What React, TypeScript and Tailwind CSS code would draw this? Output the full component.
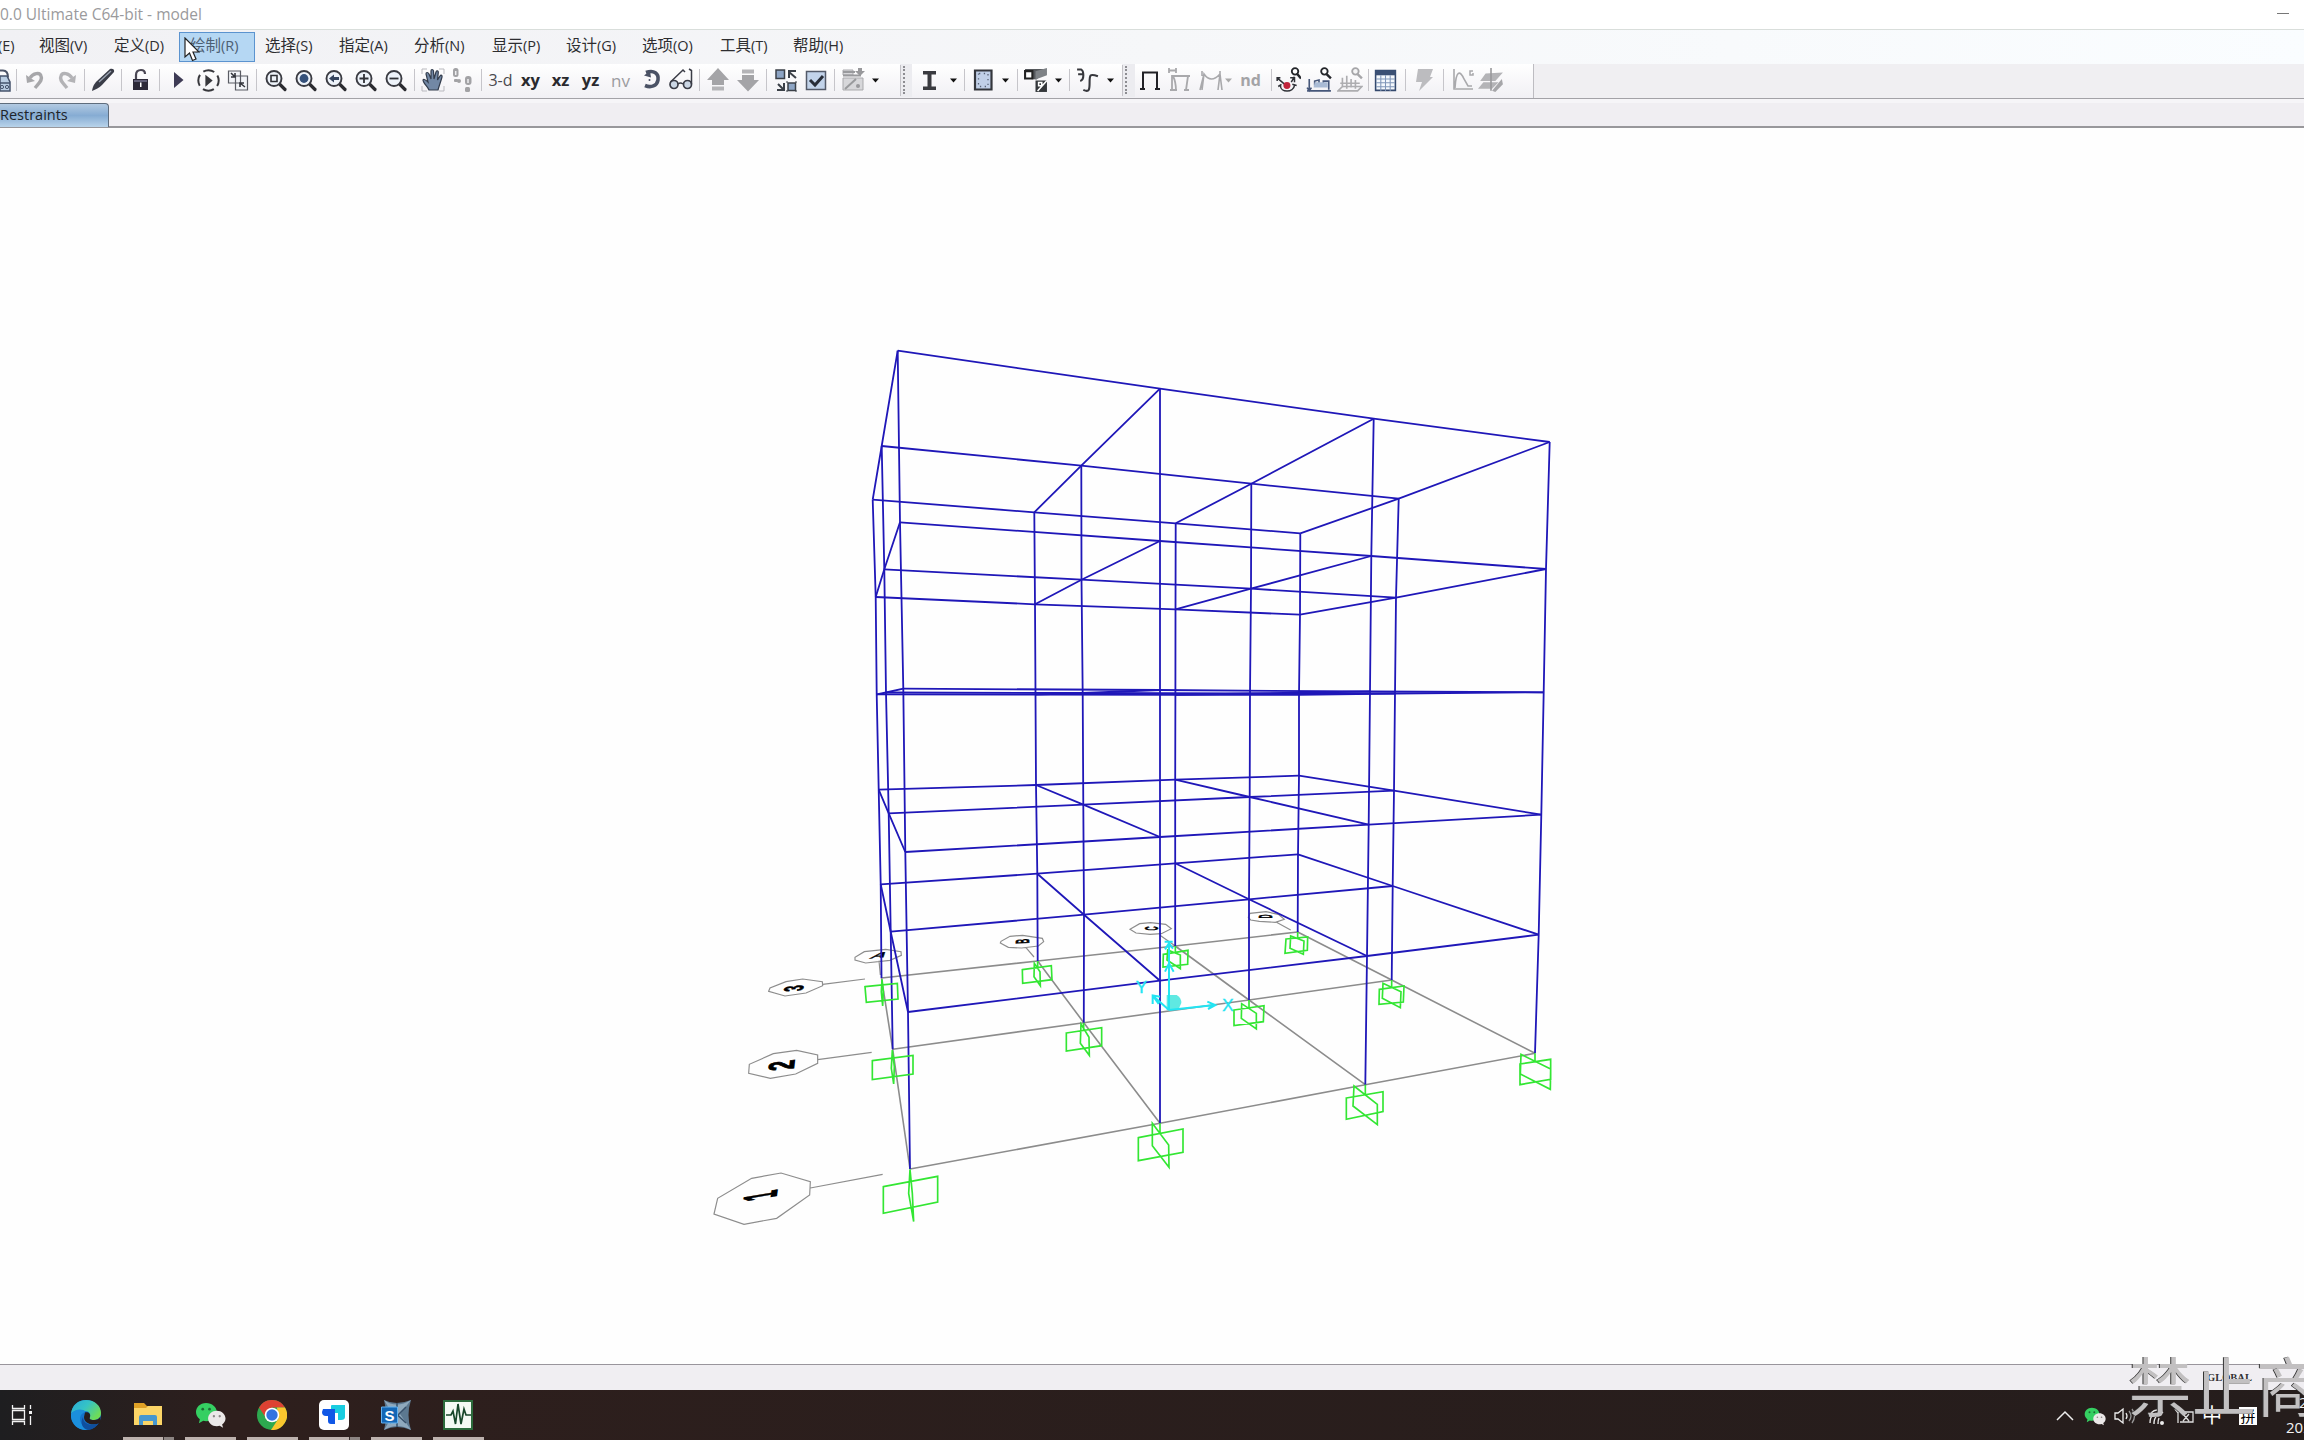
import type { ReactNode } from "react";

type Pt = [number, number];

const menus = [
  { label: "视图(V)", className: "w-[75px]" },
  { label: "定义(D)", className: "w-[75px]" },
  { label: "绘制(R)", className: "w-[76px]", active: true },
  { label: "选择(S)", className: "w-[74px]" },
  { label: "指定(A)", className: "w-[75px]" },
  { label: "分析(N)", className: "w-[78px]" },
  { label: "显示(P)", className: "w-[74px]" },
  { label: "设计(G)", className: "w-[76px]" },
  { label: "选项(O)", className: "w-[78px]" },
  { label: "工具(T)", className: "w-[73px]" },
  { label: "帮助(H)", className: "w-[75px]" },
];

// joints[level][row][bay], level 0 is the base, row 0 is grid line 1
const joints: Pt[][][] = [
  [
    [[910, 1169], [1160, 1123.3], [1365.3, 1084.7], [1535, 1053.3]],
    [[892.7, 1049.3], [1083.8, 1022.7], [1249, 1000], [1391.7, 980]],
    [[881.5, 978], [1037.7, 961], [1175.2, 946], [1297.7, 932]],
  ],
  [
    [[908, 1012], [1160, 980.7], [1367, 956], [1538.7, 934.7]],
    [[890.7, 931.7], [1084, 914.7], [1249, 899.3], [1392.7, 886]],
    [[880.7, 884.3], [1037.3, 873.7], [1175.2, 863.3], [1298, 854.3]],
  ],
  [
    [[905.3, 852], [1160, 837], [1368.7, 824.7], [1541.3, 814.7]],
    [[888.7, 813.3], [1083.3, 804.7], [1249.7, 797], [1394, 790.7]],
    [[878.7, 789.7], [1036, 785], [1175.2, 779.7], [1299, 775.7]],
  ],
  [
    [[903.3, 688.7], [1160, 690], [1370, 691.5], [1543.7, 692.3]],
    [[886, 692.5], [1082.7, 693], [1250, 693.5], [1395, 693.5]],
    [[876.7, 694.3], [1035.5, 694.5], [1175.4, 694.8], [1299, 694.8]],
  ],
  [
    [[900, 522.3], [1160, 541], [1371.3, 556], [1546, 569]],
    [[884.3, 569.3], [1081.5, 579.7], [1251, 588.7], [1396, 597.7]],
    [[875.7, 597], [1035, 604.3], [1175.5, 609.3], [1300, 614.7]],
  ],
  [
    [[897.7, 350.7], [1160, 388.7], [1373.7, 418.7], [1549.7, 442]],
    [[881.7, 446], [1081.3, 465.7], [1251.3, 483.7], [1398.7, 498.7]],
    [[872.7, 499.7], [1034.3, 512.3], [1175.7, 523.3], [1300.3, 533.3]],
  ],
];

const toPoints = (pts: Pt[]) => pts.map((p) => p.join(",")).join(" ");

const floorLines = (level: Pt[][]) => [
  ...level,
  ...[0, 1, 2, 3].map((bay) => level.map((row) => row[bay])),
];

const columns = [0, 1, 2].flatMap((row) =>
  [0, 1, 2, 3].map((bay) => joints.map((level) => level[row][bay])),
);

function Svg({ size = 24, children }: { size?: number; children: ReactNode }) {
  return (
    <svg width={size} height={size} viewBox="0 0 24 24" fill="none" className="shrink-0">
      {children}
    </svg>
  );
}

function Tool({ w = "w-[30px]", children }: { w?: string; children: ReactNode }) {
  return <div className={`flex h-full shrink-0 items-center justify-center ${w}`}>{children}</div>;
}

function Sep({ w = "w-[7.5px]" }: { w?: string }) {
  return (
    <div className={`flex shrink-0 justify-center ${w}`}>
      <div className="h-[22px] w-px bg-[#c6c5ca]" />
    </div>
  );
}

function Arrow({ w = "w-[17px]", color = "#111" }: { w?: string; color?: string }) {
  return (
    <div className={`flex shrink-0 justify-center ${w}`}>
      <svg width="7" height="5" viewBox="0 0 7 5" className="shrink-0">
        <path d="M0 .5h7L3.5 4.5z" fill={color} />
      </svg>
    </div>
  );
}

function Grip({ className }: { className: string }) {
  return (
    <div className={`flex h-[33px] shrink-0 items-center gap-[2px] bg-[#ececf0] ${className}`}>
      <div className="h-[31px] w-px bg-[#c4c3c8]" />
      <div className="h-[28px] border-l-2 border-dotted border-[#8d8d92]" />
    </div>
  );
}

function Magnifier({ children }: { children?: ReactNode }) {
  return (
    <Svg>
      <path d="m16 16.500 5 5" stroke="#2b2b30" strokeWidth="3.200" strokeLinecap="round" />
      <circle cx="10" cy="10.500" r="7.500" fill="#eef3fa" stroke="#3a3b42" strokeWidth="1.900" />
      {children}
    </Svg>
  );
}

function PlaneLabel({ text, className }: { text: string; className: string }) {
  return (
    <Tool>
      <span className={`leading-none ${className}`}>{text}</span>
    </Tool>
  );
}

function Toolbar() {
  return (
    <div className="flex h-[34px] shrink-0 items-center overflow-hidden bg-[#f0eff2]">
      <div className="flex h-full w-[1534px] shrink-0 items-center border-r border-[#bdbcc1] bg-gradient-to-b from-white to-[#f1f0f4] pb-[2px]">
        <svg width="13" height="24" viewBox="0 0 13 24" className="shrink-0">
          <path d="M0 2.500h3q5 0 5 7" fill="none" stroke="#4c5568" strokeWidth="2" />
          <path d="M0 8h7l3 6v9H0z" fill="#b9cde2" stroke="#45536c" strokeWidth="1.500" />
          <path d="M0 15h10" stroke="#45536c" strokeWidth="1.500" />
          <circle cx="2" cy="19" r="1.600" fill="none" stroke="#45536c" />
          <circle cx="7" cy="19" r="1.600" fill="none" stroke="#45536c" />
        </svg>
        <Sep />
        <Tool>
          <Svg>
            <path d="M6 10c3-5 10-6 11-2 2 4-2 7-6 12" stroke="#a7a7aa" strokeWidth="3.400" />
            <path d="M2 7l1 8 8-2z" fill="#a7a7aa" />
          </Svg>
        </Tool>
        <Tool>
          <Svg>
            <path d="M18 10c-3-5-10-6-11-2-2 4 2 7 6 12" stroke="#b3b3b6" strokeWidth="3.400" />
            <path d="M22 7l-1 8-8-2z" fill="#b3b3b6" />
          </Svg>
        </Tool>
        <Sep />
        <Tool>
          <Svg>
            <path d="M1 23c1-5 2-7 5-10L19 1c2-1 5 0 4 3L11 17c-3 3-6 4-10 6z" fill="#3a3d48" />
            <path d="M8 14 20 3" stroke="#9ba3b2" strokeWidth="1.300" />
          </Svg>
        </Tool>
        <Sep />
        <Tool>
          <Svg>
            <path d="M7 12V7q0-5 5-5 4 0 4 4" stroke="#4a4754" strokeWidth="2.200" />
            <path d="M4 11h15v11H4z" fill="#2c2938" />
            <path d="M5 13h13" stroke="#626078" strokeWidth="2" />
            <path d="M11 14.500h1.500V19H11z" fill="#fff" />
          </Svg>
        </Tool>
        <Sep />
        <Tool>
          <Svg>
            <path d="M8 4 17.500 12 8 20z" fill="#3e3b55" />
          </Svg>
        </Tool>
        <Tool>
          <Svg size={25}>
            <circle cx="12" cy="12" r="9.800" stroke="#37373c" strokeWidth="1.900" strokeDasharray="11 4.400" strokeDashoffset="5.500" />
            <path d="M9 6.500 16 12l-7 6z" fill="#37373c" />
          </Svg>
        </Tool>
        <Tool>
          <Svg>
            <path d="M2.500 3h12v5h7v14h-12v-7h-7z" fill="#f2f4f8" stroke="#5a5c64" strokeWidth="1.200" />
            <path d="M9.500 15V8h5v7z" stroke="#5a5c64" strokeWidth="1.200" />
            <path d="m5 5 4 4m0-4v4H5M19 19l-5-4m0 4v-4h4" stroke="#33353c" strokeWidth="1.600" />
          </Svg>
        </Tool>
        <Sep />
        <Tool>
          <Magnifier>
            <path d="M7 7.500h6v6H7z" stroke="#2f3036" strokeWidth="1.600" />
          </Magnifier>
        </Tool>
        <Tool>
          <Magnifier>
            <circle cx="10" cy="10.500" r="4.400" fill="#34507a" />
          </Magnifier>
        </Tool>
        <Tool>
          <Magnifier>
            <path d="M5 10.500 10 6.500v2.500h5v3h-5v2.500z" fill="#34435e" />
          </Magnifier>
        </Tool>
        <Tool>
          <Magnifier>
            <path d="M5.500 10.500h9M10 6v9" stroke="#2f3036" strokeWidth="1.800" />
          </Magnifier>
        </Tool>
        <Tool>
          <Magnifier>
            <path d="M5.500 10.500h9" stroke="#2f3036" strokeWidth="1.800" />
          </Magnifier>
        </Tool>
        <Sep />
        <Tool>
          <Svg>
            <path d="M1 6V1h5M18 1h5v5M1 18v5h5M18 23h5v-5" stroke="#b9b9be" />
            <path
              d="M8 22c-1-3-6-7-6-10 0-1 2-1 5 2L5 6c0-2 2-2 3 0l2 5V3c0-2 2-2 2.500 0l.5 8 2-7c.5-2 2.500-1 2.300.5L16.500 12l2.500-4c1-1.500 2.500-.5 2 1-1 4-3 9-4 13z"
              fill="#7288a5"
              stroke="#323c4c"
              strokeWidth="1.200"
            />
          </Svg>
        </Tool>
        <Tool>
          <Svg>
            <g fill="#a2a2a5">
              <rect x="2" y="0" width="5.500" height="9" rx="2.500" />
              <rect x="3" y="11" width="4" height="3" rx="1" />
              <circle cx="8" cy="13" r="2" />
              <rect x="14" y="8" width="6.500" height="9" rx="3" />
              <rect x="14" y="19" width="5" height="5" rx="1.500" />
            </g>
            <path d="M4.700 3v4M17 11v4" stroke="#efeff2" strokeWidth="1.500" />
          </Svg>
        </Tool>
        <Sep />
        <PlaneLabel text="3-d" className="text-[16px] text-[#4a4a4e]" />
        <PlaneLabel text="xy" className="text-[16.5px] font-bold text-[#2a2a2e]" />
        <PlaneLabel text="xz" className="text-[16.5px] font-bold text-[#2a2a2e]" />
        <PlaneLabel text="yz" className="text-[16.5px] font-bold text-[#2a2a2e]" />
        <PlaneLabel text="nv" className="text-[17px] font-medium text-[#9c9c9f]" />
        <Tool>
          <Svg>
            <path d="M7 4.500c8-3 13 1 12 7.500-1 6-7 8-13 5.500" stroke="#4b5265" strokeWidth="3.600" />
            <path d="m11 3-6 4.500 7 2z" fill="#4b5265" />
            <circle cx="10.500" cy="12" r="1" fill="#4b5265" />
          </Svg>
        </Tool>
        <Tool>
          <Svg>
            <circle cx="5" cy="16.500" r="4" fill="#cbd6e4" stroke="#3a3c46" strokeWidth="1.700" />
            <circle cx="18.500" cy="16.500" r="4" fill="#cbd6e4" stroke="#3a3c46" strokeWidth="1.700" />
            <path d="M9 16q2.500-2 5 0M1.500 14 14 2l2 2M22.500 16V2.500L20 1" stroke="#3a3c46" strokeWidth="1.500" />
          </Svg>
        </Tool>
        <Sep />
        <Tool>
          <Svg>
            <path d="m12 0 11 12h-5v5H6v-5H1z" fill="#a4a4a7" />
            <path d="M6 18.500h12v4H6z" fill="#b4b4b7" />
          </Svg>
        </Tool>
        <Tool>
          <Svg>
            <path d="M12 23.500 1 12h5V7h12v5h5z" fill="#a4a4a7" />
            <path d="M6 1.500h12v4H6z" fill="#b4b4b7" />
          </Svg>
        </Tool>
        <Sep />
        <Tool>
          <Svg>
            <path d="M2 2h8.500v8.500H2zM14 15h7.500v7.500H14z" fill="#8da4c4" stroke="#3b4048" strokeWidth="1.500" />
            <path d="M22 10l-7-6m0 6V3h7M4 16l6 6m0-7v7H3" stroke="#3b4048" strokeWidth="2" />
            <path d="M12 14h2M21 14h2M12 23h2M21 23h2" stroke="#3b4048" />
          </Svg>
        </Tool>
        <Tool>
          <Svg>
            <path d="M2.500 3.500h19v18h-19z" fill="#c2d3ea" stroke="#535a69" strokeWidth="1.500" />
            <path d="m6 12 5 5 8-9" stroke="#272d38" strokeWidth="3" />
          </Svg>
        </Tool>
        <Sep />
        <Tool>
          <Svg>
            <path d="M2 2h10v5H2zM2 10h20v12H2z" fill="#d7d7da" stroke="#a9a9ac" />
            <path d="M2 4h12M2 7.500h18M4 21l11-10" stroke="#999a9d" strokeWidth="2" />
            <path d="m14 3 5 5 5-5h-3V0h-4v3z" fill="#98989b" />
            <circle cx="17" cy="18" r="2" fill="#98989b" />
          </Svg>
        </Tool>
        <Arrow w="w-[15px]" />
        <Grip className="ml-[17px] w-[12px]" />
        <Tool w="w-[34px]">
          <Svg>
            <path d="M6 3h13v3.500h-4.500v12H19V22H6v-3.500h4.500v-12H6z" fill="#3a3b40" />
          </Svg>
        </Tool>
        <Arrow w="w-[15px]" />
        <Sep w="w-[7px]" />
        <Tool w="w-[29px]">
          <Svg>
            <path d="M4 2.500h16.500v19H4z" fill="#c1d0e8" stroke="#34363c" strokeWidth="2.200" />
            <path d="M7.500 5.500v13h9.500v-13z" stroke="#5a6478" strokeWidth="1.300" strokeDasharray="1.300 3.500" />
          </Svg>
        </Tool>
        <Arrow />
        <Sep w="w-[7px]" />
        <Tool w="w-[29px]">
          <Svg size={25}>
            <path d="M2 1h21L13 11 2 10z" fill="#55585c" />
            <path d="M12 3 23 0v7l-11 4z" fill="#7e8286" />
            <path d="M2 3h7v7H2z" fill="#fff" stroke="#222" strokeWidth="2" />
            <path d="M12 12h11v11H12z" fill="#34373b" />
            <path d="m14 22 9-10M15 14h3v3h-3z" stroke="#fff" strokeWidth="1.500" />
          </Svg>
        </Tool>
        <Arrow />
        <Sep w="w-[5px]" />
        <Tool w="w-[30px]">
          <Svg size={25}>
            <path d="M2 1.500h4q2 1 2 5.500t-3 5.500M3 6h4M8 21c6 3 6-1 6-7 0-7 0-9 8-6" stroke="#37383d" strokeWidth="2" />
          </Svg>
        </Tool>
        <Arrow />
        <Grip className="ml-[2.5px] w-[13px]" />
        <Tool w="w-[30px]">
          <Svg>
            <path d="M5 21V4.500h14V21M2 21h5M17 21h5" stroke="#222227" strokeWidth="2" />
          </Svg>
        </Tool>
        <Tool w="w-[31px]">
          <Svg>
            <path d="M1 0v5M8 0v5M1 2.500h7M4 22V8h18M5 8q3 6 3 15M20 8l-2 14M2 22h7M16 22h5" stroke="#a9a9ac" strokeWidth="1.800" />
          </Svg>
        </Tool>
        <Tool w="w-[30px]">
          <Svg>
            <path d="M3 22 5 6q7 10 16 0l2 16M5 6 1 22M21 6l-2 16M3 3v5M21 3v5" stroke="#a9a9ac" strokeWidth="1.600" />
          </Svg>
        </Tool>
        <Arrow w="w-[6px]" color="#aaa" />
        <Tool w="w-[38px]">
          <span className="text-[16px] font-bold leading-none text-[#a3a3a6]">nd</span>
        </Tool>
        <Sep w="w-[3px]" />
        <Tool w="w-[31px]">
          <Svg size={26}>
            <path d="M2 10l7 6M2 13v-3h3M15 14l3-5M14 10h4v4M5 17c0 7 12 7 13 0M3 18l3-2M16 16l4 1" stroke="#303238" strokeWidth="1.400" />
            <circle cx="11" cy="17" r="3.200" fill="#c0243c" />
            <circle cx="18.500" cy="4" r="3" fill="#fff" stroke="#24262b" strokeWidth="1.700" />
            <path d="m20.500 6.500 3.500 4" stroke="#24262b" strokeWidth="2.200" />
          </Svg>
        </Tool>
        <Tool w="w-[31px]">
          <Svg size={26}>
            <path d="M3 11v11M1 22h22M8 17v-4l4-1v5M16 18v-5h5v8M1 19l2 3 2-3" stroke="#46577a" strokeWidth="1.500" />
            <path d="M8 14h12v5H7z" fill="#a9bbd5" />
            <circle cx="17" cy="4" r="3" fill="#fff" stroke="#24262b" strokeWidth="1.700" />
            <path d="m19 6.500 4 4" stroke="#24262b" strokeWidth="2.200" />
          </Svg>
        </Tool>
        <Tool w="w-[30px]">
          <Svg size={26}>
            <path d="M5 10v9M9 8v12M13 11v8M17 12v8M1 22l4-4h18l-4 4zM3 15h18" stroke="#adadb0" strokeWidth="1.500" />
            <circle cx="17" cy="4" r="3" fill="#f5f5f6" stroke="#a6a6a9" strokeWidth="1.700" />
            <path d="m19 6.500 4 4" stroke="#a6a6a9" strokeWidth="2.200" />
          </Svg>
        </Tool>
        <Sep w="w-[7px]" />
        <Tool w="w-[28px]">
          <Svg size={25}>
            <path d="M2.500 2.500h19v19h-19z" fill="#f4f8fd" stroke="#34496e" strokeWidth="1.500" />
            <path d="M2 2h20v5H2z" fill="#3b5074" />
            <path d="M3 10.500h18M3 14.200h18M3 18h18M7.500 7v15M12 7v15M16.500 7v15" stroke="#7f95b8" />
          </Svg>
        </Tool>
        <Sep w="w-[12px]" />
        <Tool w="w-[25px]">
          <Svg>
            <path d="M6 1h15l-3 8h3L7 23l3-9H4z" fill="#bcbcbf" />
          </Svg>
        </Tool>
        <Sep w="w-[14px]" />
        <Tool w="w-[24px]">
          <Svg>
            <path d="M3 1v20h19M4 20C5 2 9 2 13 11l4 7h4" stroke="#a9a9ac" strokeWidth="1.600" />
            <path d="M22 3h-3v4h3V5" stroke="#a9a9ac" strokeWidth="1.500" />
          </Svg>
        </Tool>
        <Tool w="w-[33px]">
          <Svg size={26}>
            <path d="m7 6 16-1-7 8H2zM5 14h14l-6 6H0z" fill="#b4b4b7" />
            <path d="M12 1v21" stroke="#99999c" strokeWidth="1.500" />
            <path d="m13 22 9-11 1 5-7 7z" fill="#a6a6a9" />
          </Svg>
        </Tool>
      </div>
    </div>
  );
}

// restraint symbols and grid bubbles are in thirds of a pixel from the group's origin
const frontRestraints = [
  "M610 860 773 829V906L610 940zM690 808 686 880 701 965 697 880z",
  "M577 482 699 466V522L577 539zM637 450 634 505 641 552 643 500z",
  "M555 260 652 250 654 297 559 307zM606 238 604 275 608 318 610 275z",
  "M1027 209 1114 197 1116 239 1028 250zM1063 190 1062 230 1081 257 1080 215zM1073 183V205",
  "M1159 399 1265 383V437L1159 453zM1203 372 1201 430 1228 466 1227 412zM1211 368V392",
];

const rightRestraints = [
  "M115 833 249 807V877L115 902zM157 790V857L207 922 206 855zM180 790V822",
  "M739 714 849 695V755L739 778zM762 678 759 738 832 794V733zM796 674V704",
  "M1260 612 1352 598V658L1260 674zM1263 583 1261 642 1351 688 1352 627zM1305 580V605",
  "M402 450 492 437 490 485 402 497zM425 431 424 475 469 507V460zM447 420V445",
  "M838 388 912 378 910 426 837 433zM849 370 847 415 901 443 903 395zM875 360V384",
  "M190 283 264 271 263 313 189 321zM203 270 201 300 241 326V285zM226 258V278",
  "M558 237 623 231 622 271 555 280zM572 228 570 265 610 283 612 243zM593 216V234",
];

function ModelView() {
  return (
    <svg viewBox="0 128 2304 1236" className="block h-[1236px] w-full shrink-0 bg-[#fefefe]" fill="none">
      <g stroke="#8c8c8c" strokeWidth="1.600">
        {floorLines(joints[0]).map((pts, i) => (
          <polyline key={i} points={toPoints(pts)} />
        ))}
      </g>
      <g transform="translate(680 900) scale(.33333)" stroke="#8d8d8d" strokeWidth="3.500">
        <path d="M102 942 113 895 215 835 303 819 391 845 389 885 290 955 192 973zM391 864 608 823" />
        <path d="M206 520 208 493 280 461 350 451 413 465V490L347 522 271 535zM413 479 575 457" />
        <path d="M266 274 270 264 318 245 368 237 427 245 428 257 378 279 315 288zM428 253 555 237" />
        <path d="M525 180V172L553 155 617 148 663 155 664 166 630 181 557 189zM597 182 601 225" />
        <path d="M961 129 963 124 990 109 1028 106 1087 115 1091 125 1075 138 1025 144 985 142zM1038 143 1062 171" />
      </g>
      <g transform="translate(1100 860) scale(.33333)" stroke="#8d8d8d" strokeWidth="3.500">
        <path d="M90 208 119 191 152 188 197 193 214 206 184 221 150 223 108 219zM180 226 226 258" />
        <path d="M445 172 450 160 498 155 535 163 553 178 526 187 478 184 452 180zM528 186 572 210" />
      </g>
      <g
        fill="#000"
        stroke="#000"
        strokeWidth=".7"
        fontFamily="Liberation Sans"
        fontWeight="700"
        fontSize="20"
        textAnchor="middle"
      >
        <text transform="matrix(.1 -.7 2.350 -.4 776.500 1193)">1</text>
        <text transform="matrix(.1 -.85 1.800 -.2 794 1064)">2</text>
        <text transform="matrix(.1 -.52 1.350 -.12 803 987.500)">3</text>
        <text transform="matrix(1.050 -.1 -.5 .42 876 958)">A</text>
        <text transform="matrix(0 -.32 .95 -.05 1028.500 941)">B</text>
        <text transform="matrix(0 -.28 .95 0 1157.500 928.500)">C</text>
        <text transform="matrix(0 -.25 .95 0 1271.500 916.500)">D</text>
      </g>
      <g stroke="#1f17b8" strokeWidth="1.800">
        {joints.slice(1).flatMap((level, l) =>
          floorLines(level).map((pts, i) => <polyline key={`${l}-${i}`} points={toPoints(pts)} />),
        )}
        {columns.map((pts, i) => (
          <polyline key={i} points={toPoints(pts)} />
        ))}
      </g>
      <g transform="translate(680 900) scale(.33333)" stroke="#33e633" strokeWidth="5">
        {frontRestraints.map((d) => (
          <path key={d} d={d} />
        ))}
      </g>
      <g transform="translate(1100 860) scale(.33333)" stroke="#33e633" strokeWidth="5">
        {rightRestraints.map((d) => (
          <path key={d} d={d} />
        ))}
      </g>
      <g transform="translate(1100 860) scale(.33333)" stroke="#22e4f2" strokeWidth="6">
        <path d="M200 405h30q14 8 14 24l-8 18-36 4z" fill="#5fe9e2" stroke="none" />
        <path d="M207 450V250M195 335l12-25 14 25M195 268l12-18 12 16M194 245h24" />
        <path d="M207 450 345 435M322 425l24 10-22 12M207 450 162 410M158 432v-26l22 4M158 406l18 26" />
      </g>
      <g fill="#22e4f2" stroke="#22e4f2" strokeWidth=".4" fontFamily="Liberation Sans" fontSize="17" textAnchor="middle">
        <text x="1228" y="1010.500">X</text>
        <text x="1141.500" y="993">Y</text>
      </g>
    </svg>
  );
}

function WeChat({ size }: { size: number }) {
  return (
    <svg width={size} height={size} viewBox="0 0 32 32">
      <path d="M11.500 4C5 4 1 8.500 1 13.500c0 3 1.500 5.500 4 7.300L4 25l4.500-2.500c1 .3 2 .4 3 .4 6 0 11-4 11-9.400S17.500 4 11.500 4z" fill="#35cf62" />
      <path d="M22.500 12c-5 0-9 3.500-9 8s4 8 9 8c1 0 2 0 3-.4l3.500 2-1-3.400c2.200-1.500 3.500-3.700 3.500-6.200 0-4.500-4-8-9-8z" fill="#ebe8e8" />
      <g fill="#1d6b35">
        <circle cx="8" cy="10.500" r="1.400" />
        <circle cx="15" cy="10.500" r="1.400" />
      </g>
      <g fill="#8a8686">
        <circle cx="19.500" cy="17.800" r="1.200" />
        <circle cx="25.500" cy="17.800" r="1.200" />
      </g>
    </svg>
  );
}

function TaskItem({ running, split, children }: { running?: boolean; split?: boolean; children: ReactNode }) {
  return (
    <div className="flex h-full w-[62px] shrink-0 flex-col items-center">
      <div className="flex flex-1 items-center pt-[2px]">{children}</div>
      <div className={`flex h-[3px] w-[51px] justify-end ${running ? "bg-[#bdb2ae]" : ""}`}>
        {split ? <div className="w-[11px] border-l border-[#3a3231] bg-[#8c8482]" /> : null}
      </div>
    </div>
  );
}

function Taskbar() {
  return (
    <div className="flex h-[50px] shrink-0 bg-gradient-to-r from-[#1e1e20] via-[#2e1f1d] via-10% to-[#251d1c]">
      <div className="flex w-[55px] shrink-0 items-center pl-[11px]">
        <svg width="22" height="22" viewBox="0 0 22 22" fill="none" stroke="#f2f2f2" strokeWidth="1.300">
          <path d="M1.500 1v3.500h12V1M1.500 21v-3.500h12V21M1.500 6.500h12v9h-12zM19.500 1v4M19.500 12v9" />
          <path d="M18 7h3v3h-3z" fill="#f2f2f2" stroke="none" />
        </svg>
      </div>
      <TaskItem>
        <svg width="30" height="30" viewBox="0 0 30 30">
          <defs>
            <linearGradient id="edgeTop" x1="0" y1="0" x2="1" y2=".6">
              <stop offset="0" stopColor="#2aa9d8" />
              <stop offset=".5" stopColor="#35c3c6" />
              <stop offset="1" stopColor="#6fdc56" />
            </linearGradient>
          </defs>
          <circle cx="15" cy="15" r="15" fill="#1573cc" />
          <path d="M0 14C1 5 7 0 15 0c9 0 15 6 15 13 0 5-4 7-7 7-4 0-5-1-4-3 1-3-1-6-5-6-6-2-11-1-14 3z" fill="url(#edgeTop)" />
          <path d="M0 14c4-5 11-6 15-2-6 1-7 7-5 11 2 4 5 6 8 6.500C8 32-1 24 0 14z" fill="#1b8fdd" />
          <path d="M12 17c0 6 6 10 16 6-3 4-7 7-11 7-6-1-8-8-5-13z" fill="#0f4f9f" />
          <path d="M14 12.500c3-1 6 1 5 4.500-1 2 0 3 4 3 3 0 5-1 6.500-3.500L29 23c-7 3-16 1-16-6z" fill="#271d1e" />
        </svg>
      </TaskItem>
      <TaskItem running split>
        <svg width="30" height="30" viewBox="0 0 30 30">
          <path d="M1 3h10l3 3h14v19H1z" fill="#dfa126" />
          <path d="M1 8h12l2-2h14v19H1z" fill="#fbd567" />
          <path d="M6 25v-8q0-2 2-2h14q2 0 2 2v8h-4v-4h-10v4z" fill="#4697cf" />
        </svg>
      </TaskItem>
      <TaskItem running>
        <WeChat size={31} />
      </TaskItem>
      <TaskItem running>
        <svg width="30" height="30" viewBox="0 0 30 30">
          <circle cx="15" cy="15" r="15" fill="#2da94f" />
          <path d="M2 7.500A15 15 0 0 1 28 7.500H15L9 18z" fill="#dd4132" />
          <path d="M28 7.500A15 15 0 0 1 14 30l7.500-11.500L20 7.500z" fill="#f9c62e" />
          <circle cx="15" cy="15" r="7.300" fill="#fff" />
          <circle cx="15" cy="15" r="5.700" fill="#3474e0" />
        </svg>
      </TaskItem>
      <TaskItem running split>
        <svg width="30" height="30" viewBox="0 0 30 30">
          <rect width="30" height="30" rx="5" fill="#fff" />
          <path d="M12 6q0-1 1-1h13v12q0 3-4 3h-3v-7h-7z" fill="#19cde0" />
          <path d="M4 9h12v15h-4q-3 0-3-3v-5H7q-4 0-4-4z" fill="#1057e6" />
        </svg>
      </TaskItem>
      <TaskItem running>
        <svg width="30" height="30" viewBox="0 0 30 30">
          <path d="M3 0q12 6 27 0-5 15 0 30-14-6-27 0 4-15 0-30z" fill="#5c7890" />
          <path d="M3 0q12 9 27 0L19 14l11 16q-14-8-27 0l9-15z" fill="#8fa9bd" />
          <path d="M16 3v24M9 8l16 15M25 7 9 23" stroke="#37506a" strokeWidth="1.500" />
          <path d="M.5 7h16v16H.5z" fill="#1467b5" stroke="#63b1ee" />
          <text x="8.500" y="20.500" fill="#fff" fontFamily="Liberation Sans" fontSize="15" fontWeight="700" textAnchor="middle">
            S
          </text>
        </svg>
      </TaskItem>
      <TaskItem running>
        <svg width="30" height="30" viewBox="0 0 30 30" fill="none">
          <path d="M1 1h28v28H1z" fill="#f4faf4" stroke="#2c6b3c" strokeWidth="2" />
          <path d="M3 15h5l2-4 2.500 13L15 4l3 20 3-15 2 6h5" stroke="#17472a" strokeWidth="1.700" />
        </svg>
      </TaskItem>
      <div className="relative ml-auto flex w-[248px] shrink-0 items-center overflow-hidden pt-[2px] text-white">
        <svg width="18" height="12" viewBox="0 0 18 12" fill="none" className="shrink-0">
          <path d="m1 10 8-8 8 8" stroke="#eee" strokeWidth="1.500" />
        </svg>
        <div className="ml-[10px] shrink-0">
          <WeChat size={22} />
        </div>
        <svg width="22" height="20" viewBox="0 0 22 20" fill="none" className="ml-[8px] shrink-0" stroke="#eee" strokeWidth="1.300">
          <path d="M1 7v6h3l5 4V3L4 7zM12 7q2 3 0 6" />
          <path d="M15 5q4 5 0 10M18 3q5 7 0 14" stroke="#999" />
        </svg>
        <svg width="18" height="20" viewBox="0 0 18 20" fill="none" className="ml-[11px] shrink-0" stroke="#e6e6e6" strokeWidth="1.400">
          <path d="M4 7Q10 1 16 7M3 17q0-6 3-8M7 18q0-5 2-7M11 18q0-4 1-6" />
          <circle cx="15" cy="17" r="1.300" fill="#fff" />
        </svg>
        <svg width="20" height="20" viewBox="0 0 20 20" fill="none" className="ml-[9px] shrink-0" stroke="#ddd" strokeWidth="1.300">
          <path d="M1 3l3 4 3-4M4 7v10M6 16h13V6H9M9 8l6 7M15 8l-6 7" />
        </svg>
        <span className="ml-[8px] shrink-0 text-[20px] leading-none">中</span>
        <span className="ml-[17px] flex h-[18px] w-[18px] shrink-0 items-center justify-center bg-white text-[15px] leading-none text-black">
          拼
        </span>
        <div className="absolute top-0 left-[230px] flex flex-col whitespace-nowrap text-[15px] leading-[25px] text-[#f2f2f2]">
          <span className="pl-[13px]">20</span>
          <span>2023</span>
        </div>
      </div>
    </div>
  );
}

export default function App() {
  return (
    <div className="relative flex h-[1440px] w-[2304px] flex-col overflow-hidden bg-white font-['Open_Sans','Noto_Sans_CJK_SC',sans-serif]">
      <div className="flex h-[29px] shrink-0 items-center justify-between pr-[15px] text-[15.5px] text-[#9a9a9c]">
        <span className="whitespace-nowrap">0.0 Ultimate C64-bit - model</span>
        <div className="mb-[3px] h-px w-3 bg-[#777]" />
      </div>
      <div className="flex h-[35px] shrink-0 items-center border-t border-[#d9dedb] bg-gradient-to-r from-[#f1f1f4] via-[#f6f7f9] to-[#fafdff] pb-[1px] text-[15.5px] text-[#2d2d30]">
        <span className="w-[29px] -translate-x-[2px] pb-[2px] text-[14.5px]">(E)</span>
        {menus.map((m) => (
          <div
            key={m.label}
            className={`flex h-[30px] items-center whitespace-nowrap pb-[2px] ${m.className} ${m.active ? "border border-[#5b93cf] bg-[#b5d7f3] pl-[10px] text-[#4d6073]" : "pl-[10px]"}`}
          >
            {m.label.slice(0, 2)}
            <span className="text-[14.5px]">{m.label.slice(2)}</span>
          </div>
        ))}
      </div>
      <Toolbar />
      <div className="h-[5px] shrink-0 border-t border-[#a3a2a7] bg-[#f6f5f8]" />
      <div className="flex h-[25px] shrink-0 border-b-2 border-[#98979b] bg-[#f0eef2]">
        <div className="h-[24px] w-[109px] rounded-tr-[4px] border-r border-t border-[#5f6d7d] bg-gradient-to-b from-[#b3cae2] via-[#86acd3] to-[#b8d3ea]">
          <span className="block text-[14.5px] leading-[22px] text-[#20242a]">Restraints</span>
        </div>
      </div>
      <ModelView />
      <div className="flex h-[26px] shrink-0 items-center border-t border-[#99959c] bg-[#f0eef2]">
        <span className="ml-[2207px] font-['Liberation_Serif',serif] text-[10.5px] font-bold text-[#333]">GLOBAL</span>
      </div>
      <Taskbar />
      <div className="absolute left-[2128px] top-[1337px] whitespace-nowrap font-['Noto_Sans_CJK_SC',sans-serif] text-[64px] font-normal leading-[92px] text-[#c2c0c1] [text-shadow:-1px_0_0_#333]">
        禁止商
      </div>
      <svg width="16" height="26" viewBox="0 0 16 26" className="absolute left-[184px] top-[37px]">
        <path d="M1 1v19l4.500-4 3 7.500 3.500-1.500-3-7h6z" fill="#fff" stroke="#222" strokeWidth="1.200" />
      </svg>
    </div>
  );
}
